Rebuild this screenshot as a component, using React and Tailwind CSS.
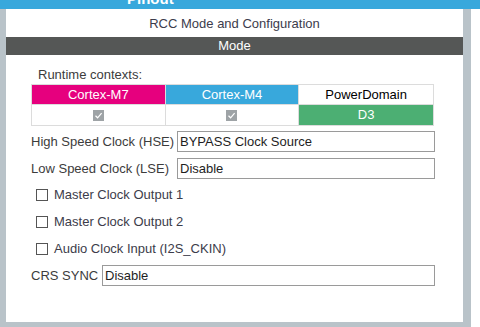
import React from 'react';

const Check = () => (
    <div className="w-[11px] h-[11px] bg-[#9ea3a6] flex items-center justify-center">
        <svg width="9" height="9" viewBox="0 0 9 9">
            <path d="M1.5 4.8 L3.6 6.8 L7.6 2.2" fill="none" stroke="#ffffff" strokeWidth="1.2" />
        </svg>
    </div>
);

const SelectRow = ({ label, value, inputLeft }) => (
    <div className="flex items-center h-[21px] pl-[25px]">
        <span className="text-[#3c3c3c] whitespace-nowrap">{label}</span>
        <div
            className="h-[21px] border border-[#9a9a9a] flex items-center pl-[2px] text-[#1e1e1e] ml-auto w-[258px] mr-[28px]"
            style={inputLeft ? { width: inputLeft } : undefined}
        >
            {value}
        </div>
    </div>
);

const CheckRow = ({ label }) => (
    <div className="flex items-center h-[12px] pl-[30px] gap-[6px]">
        <div className="w-[12px] h-[12px] border border-[#555] bg-white"></div>
        <span className="text-[#3c3c4a] whitespace-nowrap">{label}</span>
    </div>
);

export default function App() {
    return (
        <div className="w-[480px] h-[327px] bg-white flex flex-col overflow-hidden text-[13px]" style={{ fontFamily: '"Liberation Sans", Arial, sans-serif' }}>
            <div className="h-[9px] bg-[#38a8dc] overflow-hidden relative">
                <span className="absolute left-[127px] top-[-12px] text-white font-bold text-[15px]">Pinout</span>
            </div>
            <div className="flex flex-1">
                <div className="w-[6px] bg-[#b9c3c9]"></div>
                <div className="w-[457px] flex flex-col">
                    <div className="flex-1 bg-white flex flex-col">
                        <div className="h-[28px] flex items-center justify-center text-[#3c3c4c] text-[13px] pt-[1px]">
                            RCC Mode and Configuration
                        </div>
                        <div className="h-[18px] bg-[#555756] text-white flex items-center justify-center text-[13px]">
                            Mode
                        </div>
                        <div className="pl-[32px] mt-[11px] h-[18px] flex items-center text-[#3c3c3c]">Runtime contexts:</div>
                        <div className="ml-[25px] w-[403px] grid grid-cols-3 border border-[#dcdcdc]">
                            <div className="h-[19px] bg-[#e6007e] text-white flex items-center justify-center border-r border-[#dcdcdc]">Cortex-M7</div>
                            <div className="h-[19px] bg-[#38a8dc] text-white flex items-center justify-center border-r border-[#dcdcdc]">Cortex-M4</div>
                            <div className="h-[19px] bg-white text-black flex items-center justify-center">PowerDomain</div>
                            <div className="h-[21px] flex items-center justify-center border-r border-t border-[#dcdcdc]"><Check /></div>
                            <div className="h-[21px] flex items-center justify-center border-r border-t border-[#dcdcdc]"><Check /></div>
                            <div className="h-[21px] bg-[#4caf73] text-white flex items-center justify-center border-t border-[#dcdcdc]">D3</div>
                        </div>
                        <div className="mt-[5px] flex flex-col gap-[6px]">
                            <SelectRow label="High Speed Clock (HSE)" value="BYPASS Clock Source" />
                            <SelectRow label="Low Speed Clock (LSE)" value="Disable" />
                        </div>
                        <div className="mt-[10px] flex flex-col gap-[15px]">
                            <CheckRow label="Master Clock Output 1" />
                            <CheckRow label="Master Clock Output 2" />
                            <CheckRow label="Audio Clock Input (I2S_CKIN)" />
                        </div>
                        <div className="mt-[10px]">
                            <SelectRow label="CRS SYNC" value="Disable" inputLeft="333px" />
                        </div>
                    </div>
                    <div className="h-[5px] bg-[#b9c3c9]"></div>
                </div>
                <div className="w-[8px] bg-[#b9c3c9]"></div>
                <div className="flex-1 bg-white"></div>
            </div>
        </div>
    );
}
